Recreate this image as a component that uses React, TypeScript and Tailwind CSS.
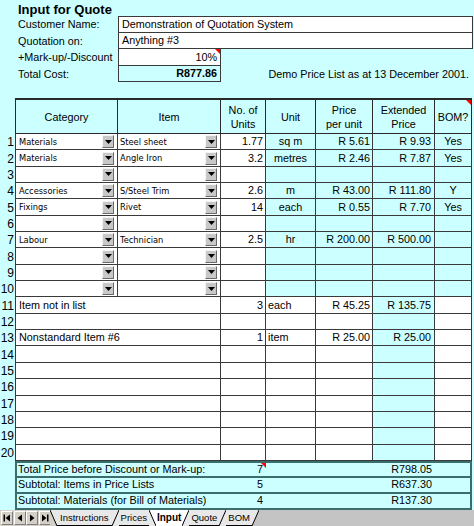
import React from 'react';

type Row = { cat?: string; item?: string; units?: string; unit?: string; price?: string; ext?: string; bom?: string };

const topRows: Row[] = [
  { cat: 'Materials', item: 'Steel sheet', units: '1.77', unit: 'sq m', price: 'R 5.61', ext: 'R 9.93', bom: 'Yes' },
  { cat: 'Materials', item: 'Angle Iron', units: '3.2', unit: 'metres', price: 'R 2.46', ext: 'R 7.87', bom: 'Yes' },
  {},
  { cat: 'Accessories', item: 'S/Steel Trim', units: '2.6', unit: 'm', price: 'R 43.00', ext: 'R 111.80', bom: 'Y' },
  { cat: 'Fixings', item: 'Rivet', units: '14', unit: 'each', price: 'R 0.55', ext: 'R 7.70', bom: 'Yes' },
  {},
  { cat: 'Labour', item: 'Technician', units: '2.5', unit: 'hr', price: 'R 200.00', ext: 'R 500.00' },
  {},
  {},
  {},
];

const bottomRows: Row[] = [
  { cat: 'Item not in list', units: '3', unit: 'each', price: 'R 45.25', ext: 'R 135.75' },
  {},
  { cat: 'Nonstandard Item #6', units: '1', unit: 'item', price: 'R 25.00', ext: 'R 25.00' },
  {},
  {},
  {},
  {},
  {},
  {},
  {},
];

function RedMark() {
  return (
    <div className="absolute top-0 right-0 w-0 h-0 border-l-[5px] border-l-transparent border-t-[5px] border-t-[#ff0000]" />
  );
}

function Drop() {
  return (
    <div className="w-[12px] h-[13px] mr-[3px] shrink-0 bg-[#c8c8c8] border border-t-[#f4f4f4] border-l-[#f4f4f4] border-r-[#6a6a6a] border-b-[#6a6a6a] flex items-center justify-center">
      <svg width="7" height="4" viewBox="0 0 7 4">
        <path d="M0 0H7L3.5 4Z" fill="#000" />
      </svg>
    </div>
  );
}

function RowNum({ n }: { n: number }) {
  return (
    <div className="w-[15px] shrink-0 flex items-center justify-end pr-[1px] text-[12px] leading-none whitespace-nowrap">
      {n}
    </div>
  );
}

function TopRow({ r, n }: { r: Row; n: number }) {
  return (
    <div className="flex h-[16.35px]">
      <RowNum n={n} />
      <div className="w-[103px] shrink-0 bg-white border-l border-r border-b border-[#3a3a3a] flex items-center pl-[3px] font-['DejaVu_Sans',sans-serif] text-[8.3px] leading-[12px]">
        <span className="flex-1 whitespace-nowrap">{r.cat}</span>
        <Drop />
      </div>
      <div className="w-[103px] shrink-0 bg-white border-r border-b border-[#3a3a3a] flex items-center pl-[2px] font-['DejaVu_Sans',sans-serif] text-[8.3px] leading-[12px]">
        <span className="flex-1 whitespace-nowrap">{r.item}</span>
        <Drop />
      </div>
      <div className="w-[45px] shrink-0 bg-white border-r border-b border-[#3a3a3a] flex items-center justify-end pr-[2px]">{r.units}</div>
      <div className="w-[50px] shrink-0 bg-[#ccffff] border-r border-b border-[#3a3a3a] flex items-center justify-center">{r.unit}</div>
      <div className="w-[57px] shrink-0 bg-[#ccffff] border-r border-b border-[#3a3a3a] flex items-center justify-end pr-[2px]">{r.price}</div>
      <div className="w-[62px] shrink-0 bg-[#ccffff] border-r border-b border-[#3a3a3a] flex items-center justify-end pr-[3px]">{r.ext}</div>
      <div className="w-[37px] shrink-0 bg-[#ccffff] border-r border-b border-[#3a3a3a] flex items-center justify-center">{r.bom}</div>
    </div>
  );
}

function BottomRow({ r, n }: { r: Row; n: number }) {
  return (
    <div className="flex h-[16.35px]">
      <RowNum n={n} />
      <div className="w-[206px] shrink-0 bg-white border-l border-r border-b border-[#3a3a3a] flex items-center pl-[3px] whitespace-nowrap">{r.cat}</div>
      <div className="w-[45px] shrink-0 bg-white border-r border-b border-[#3a3a3a] flex items-center justify-end pr-[2px]">{r.units}</div>
      <div className="w-[50px] shrink-0 bg-white border-r border-b border-[#3a3a3a] flex items-center pl-[2px]">{r.unit}</div>
      <div className="w-[57px] shrink-0 bg-white border-r border-b border-[#3a3a3a] flex items-center justify-end pr-[2px]">{r.price}</div>
      <div className="w-[62px] shrink-0 bg-[#ccffff] border-r border-b border-[#3a3a3a] flex items-center justify-end pr-[3px]">{r.ext}</div>
      <div className="w-[37px] shrink-0 bg-white border-r border-b border-[#3a3a3a] flex items-center justify-center">{r.bom}</div>
    </div>
  );
}

function Head({ w, children, first, mark }: { w: string; children: React.ReactNode; first?: boolean; mark?: boolean }) {
  return (
    <div
      className={
        (first ? 'border-l ' : '') +
        w +
        ' relative shrink-0 border-r border-b border-t-2 border-[#2a2a2a] flex items-center justify-center text-center leading-[14px]'
      }
    >
      {children}
      {mark && <RedMark />}
    </div>
  );
}

function SlashL({ a, b }: { a: string; b: string }) {
  return (
    <svg width="7" height="16" viewBox="0 0 7 16" className="shrink-0 block">
      <polygon points="0,0 0,16 7,16" fill={a} />
      <polygon points="0,0 7,0 7,16" fill={b} />
      <line x1="0" y1="0" x2="7" y2="16" stroke="#000" strokeWidth="1" />
    </svg>
  );
}

function SlashR({ a, b }: { a: string; b: string }) {
  return (
    <svg width="7" height="16" viewBox="0 0 7 16" className="shrink-0 block">
      <polygon points="0,0 7,0 0,16" fill={a} />
      <polygon points="7,0 7,16 0,16" fill={b} />
      <line x1="0" y1="16" x2="7" y2="0" stroke="#000" strokeWidth="1" />
    </svg>
  );
}

function NavBtn({ kind }: { kind: number }) {
  return (
    <div className="w-[12px] h-[14px] mt-[1px] mr-[0.5px] shrink-0 flex items-center justify-center bg-[#d4d0c8] border border-t-[#ffffff] border-l-[#ffffff] border-r-[#808080] border-b-[#808080]">
      <svg width="8" height="8" viewBox="0 0 8 8">
        {kind === 0 && (
          <>
            <rect x="0.5" y="0.5" width="1.5" height="7" fill="#000" />
            <polygon points="7,0.5 2.5,4 7,7.5" fill="#000" />
          </>
        )}
        {kind === 1 && <polygon points="6,0.5 1.5,4 6,7.5" fill="#000" />}
        {kind === 2 && <polygon points="2,0.5 6.5,4 2,7.5" fill="#000" />}
        {kind === 3 && (
          <>
            <polygon points="1,0.5 5.5,4 1,7.5" fill="#000" />
            <rect x="6" y="0.5" width="1.5" height="7" fill="#000" />
          </>
        )}
      </svg>
    </div>
  );
}

export default function App() {
  const inact = '#e8e8e8';
  const act = '#ffffff';
  const empty = '#c4c4c4';
  const nav = '#d4d0c8';
  return (
    <div className="w-[474px] h-[526px] overflow-hidden bg-[#ccffff] text-black font-['Liberation_Sans',Arial,sans-serif] text-[10.8px] leading-none flex flex-col">
      <div className="h-[16px] shrink-0 pl-[18px] pt-[3px] text-[13px] font-bold leading-[13px]">Input for Quote</div>

      <div className="flex h-[17px] shrink-0 items-stretch">
        <div className="w-[118px] shrink-0 pl-[18px] flex items-center">Customer Name:</div>
        <div className="w-[355px] shrink-0 bg-white border border-[#3a3a3a] flex items-center pl-[3px]">
          Demonstration of Quotation System
        </div>
      </div>
      <div className="flex h-[16px] shrink-0 items-stretch">
        <div className="w-[118px] shrink-0 pl-[18px] flex items-center">Quotation on:</div>
        <div className="w-[355px] shrink-0 bg-white border-x border-b border-[#3a3a3a] flex items-center pl-[3px]">Anything #3</div>
      </div>
      <div className="flex h-[17px] shrink-0 items-stretch">
        <div className="w-[118px] shrink-0 pl-[18px] flex items-center">+Mark-up/-Discount</div>
        <div className="relative w-[103px] shrink-0 bg-white border-x border-b border-[#3a3a3a] flex items-center justify-end pr-[3px]">
          10%
          <RedMark />
        </div>
      </div>
      <div className="flex h-[16px] shrink-0 items-stretch">
        <div className="w-[118px] shrink-0 pl-[18px] flex items-center">Total Cost:</div>
        <div className="w-[103px] shrink-0 border-x border-b border-[#3a3a3a] flex items-center justify-end pr-[3px] font-bold">R877.86</div>
        <div className="flex-1 flex items-center justify-end pr-[5px]">Demo Price List as at 13 December 2001.</div>
      </div>
      <div className="h-[16px] shrink-0" />

      <div className="flex h-[36px] shrink-0">
        <div className="w-[15px] shrink-0" />
        <Head w="w-[103px]" first>Category</Head>
        <Head w="w-[103px]">Item</Head>
        <Head w="w-[45px]">
          No. of
          <br />
          Units
        </Head>
        <Head w="w-[50px]">Unit</Head>
        <Head w="w-[57px]">
          Price
          <br />
          per unit
        </Head>
        <Head w="w-[62px]">
          Extended
          <br />
          Price
        </Head>
        <Head w="w-[37px]" mark>
          BOM?
        </Head>
      </div>

      {topRows.map((r, i) => (
        <TopRow key={'t' + i} r={r} n={i + 1} />
      ))}
      {bottomRows.map((r, i) => (
        <BottomRow key={'b' + i} r={r} n={i + 11} />
      ))}

      <div className="ml-[15px] w-[457px] shrink-0 flex flex-col">
        <div className="flex h-[17px] border-t-2 border-b-2 border-x-2 border-[#3b6d6d]">
          <div className="w-[204px] shrink-0 pl-[1px] flex items-center whitespace-nowrap">Total Price before Discount or Mark-up:</div>
          <div className="relative w-[45px] shrink-0 flex items-center justify-end pr-[3px]">
            7
            <RedMark />
          </div>
          <div className="w-[107px] shrink-0" />
          <div className="w-[62px] shrink-0 flex items-center justify-end pr-[3px]">R798.05</div>
        </div>
        <div className="flex h-[16px] border-b-2 border-x-2 border-[#3b6d6d]">
          <div className="w-[204px] shrink-0 pl-[1px] flex items-center whitespace-nowrap">Subtotal: Items in Price Lists</div>
          <div className="w-[45px] shrink-0 flex items-center justify-end pr-[3px]">5</div>
          <div className="w-[107px] shrink-0" />
          <div className="w-[62px] shrink-0 flex items-center justify-end pr-[3px]">R637.30</div>
        </div>
        <div className="flex h-[16px] border-b-2 border-x-2 border-[#3b6d6d]">
          <div className="w-[204px] shrink-0 pl-[1px] flex items-center whitespace-nowrap">Subtotal: Materials (for Bill of Materials)</div>
          <div className="w-[45px] shrink-0 flex items-center justify-end pr-[3px]">4</div>
          <div className="w-[107px] shrink-0" />
          <div className="w-[62px] shrink-0 flex items-center justify-end pr-[3px]">R137.30</div>
        </div>
      </div>

      <div className="flex h-[16px] shrink-0 bg-[#c4c4c4] text-[9.5px] items-stretch">
        <div className="flex bg-[#d4d0c8] pl-[1px] w-[50px] shrink-0">
          <NavBtn kind={0} />
          <NavBtn kind={1} />
          <NavBtn kind={2} />
          <NavBtn kind={3} />
        </div>
        <SlashL a={nav} b={inact} />
        <div className="bg-[#e8e8e8] px-[3px] flex items-center border-b border-black">Instructions</div>
        <SlashR a={inact} b={inact} />
        <div className="bg-[#e8e8e8] px-[2px] flex items-center border-b border-black">Prices</div>
        <SlashL a={inact} b={act} />
        <div className="bg-white px-[1px] flex items-center font-bold text-[10px]">Input</div>
        <SlashR a={act} b={inact} />
        <div className="bg-[#e8e8e8] px-[2px] flex items-center border-b border-black">Quote</div>
        <SlashR a={inact} b={inact} />
        <div className="bg-[#e8e8e8] px-[2px] flex items-center border-b border-black">BOM</div>
        <SlashR a={inact} b={empty} />
        <div className="flex-1" />
      </div>
    </div>
  );
}
